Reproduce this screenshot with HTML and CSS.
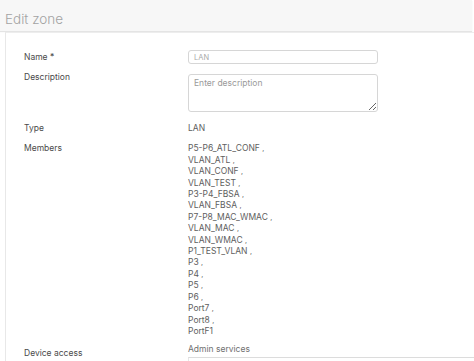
FILE: index.html
```html
<!DOCTYPE html>
<html>
<head>
	<meta charset="utf-8">
	<title>Edit zone</title>
	<link rel="stylesheet" href="styles.css">
</head>
<body>
<div class="header">Edit zone</div>
<div class="card">
	<div class="row row-name">
		<label class="label">Name *</label>
		<div class="value"><input type="text" class="field" value="LAN"></div>
	</div>
	<div class="row row-desc">
		<label class="label">Description</label>
		<div class="value"><textarea class="field area" placeholder="Enter description"></textarea></div>
	</div>
	<div class="row row-type">
		<label class="label">Type</label>
		<div class="value">LAN</div>
	</div>
	<div class="row row-members">
		<label class="label">Members</label>
		<ul class="members">
			<li>P5-P6_ATL_CONF <span>,</span></li>
			<li>VLAN_ATL <span>,</span></li>
			<li>VLAN_CONF <span>,</span></li>
			<li>VLAN_TEST <span>,</span></li>
			<li>P3-P4_FBSA <span>,</span></li>
			<li>VLAN_FBSA <span>,</span></li>
			<li>P7-P8_MAC_WMAC <span>,</span></li>
			<li>VLAN_MAC <span>,</span></li>
			<li>VLAN_WMAC <span>,</span></li>
			<li>P1_TEST_VLAN <span>,</span></li>
			<li>P3 <span>,</span></li>
			<li>P4 <span>,</span></li>
			<li>P5 <span>,</span></li>
			<li>P6 <span>,</span></li>
			<li>Port7 <span>,</span></li>
			<li>Port8 <span>,</span></li>
			<li>PortF1</li>
		</ul>
	</div>
	<div class="row row-access">
		<label class="label">Device access</label>
		<div class="services">
			<div class="services-title">Admin services</div>
			<div class="services-box"></div>
		</div>
	</div>
</div>
</body>
</html>
```

FILE: styles.css
```css
body{
	margin: 0;
	background: #fff;
	font-family: "Inter", "Roboto", sans-serif;
	font-size: 8.5px;
	color: #444;
	overflow: hidden;
	height: 361px;
}
.header{
	width: 467px;
	height: 31px;
	padding-left: 5px;
	background: #f7f7f7;
	color: #a3a3a3;
	font-size: 13.5px;
	font-weight: 300;
	line-height: 39px;
	box-shadow: 0 1px 1px #e4e4e4;
}
.card{
	box-sizing: border-box;
	margin-left: 5px;
	margin-top: 1px;
	height: 329px;
	overflow: hidden;
	padding: 17px 0 0 18px;
	border-left: 1px solid #e8e8e8;
	border-top: 1px solid #ededed;
}
.row{
	display: grid;
	grid-template-columns: 164px 1fr;
}
.label{
	color: #4a4a4a;
	line-height: 11.4px;
}
.value{
	color: #5e5e5e;
	line-height: 11.4px;
}
.field{
	box-sizing: border-box;
	width: 190px;
	border: 1px solid #d6d6d6;
	border-radius: 3px;
	font-family: inherit;
	font-size: 7.5px;
	outline: none;
	margin: 0;
	display: block;
}
.row-name .label{
	line-height: 14px;
}
.row-name .field{
	height: 14px;
	padding: 0 5px;
	color: #aaa;
}
.row-desc{
	margin-top: 10px;
}
.row-desc .label{
	margin-top: -2px;
}
.area{
	height: 38px;
	padding: 3px 5px;
	font-size: 8.5px;
	resize: vertical;
}
.area::placeholder{
	color: #9a9a9a;
}
.row-type{
	margin-top: 11px;
}
.row-members{
	margin-top: 9px;
}
.members{
	list-style: none;
	margin: 0;
	padding: 0;
	color: #5e5e5e;
	line-height: 11.4px;
}
.members span{
	font-size: 7px;
}
.row-access{
	margin-top: 7px;
}
.row-access .label{
	margin-top: 4px;
}
.services-title{
	color: #707070;
	line-height: 11.4px;
}
.services-box{
	margin-top: 1px;
	height: 20px;
	border-top: 1px solid #dcdcdc;
	border-left: 1px solid #e6e6e6;
	margin-right: -20px;
}
```
